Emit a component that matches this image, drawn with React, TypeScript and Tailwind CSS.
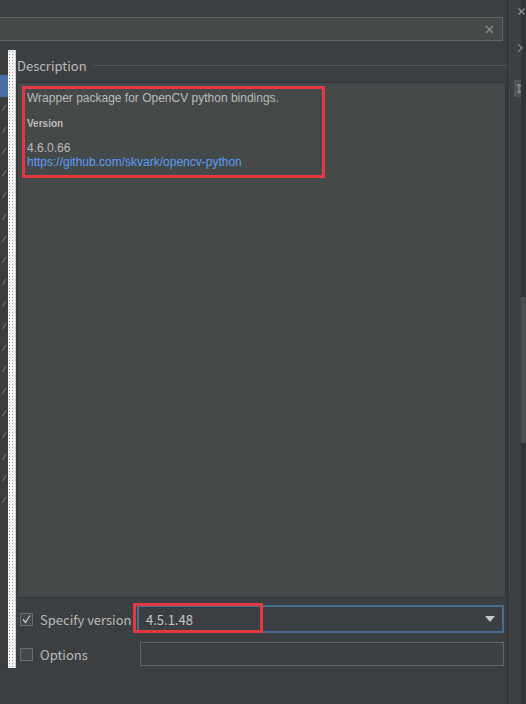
import React from "react";

const ui = { fontFamily: '"Noto Sans CJK SC", "Noto Sans", "Liberation Sans", sans-serif' };
const html = { fontFamily: '"Liberation Sans", Arial, sans-serif' };

function Tick() {
  return (
    <svg width="8" height="8" viewBox="0 0 8 8">
      <path d="M6 1 L2.5 7" stroke="#7d8083" strokeWidth="1" fill="none" />
    </svg>
  );
}

export default function App() {
  const rows = Array.from({ length: 19 });
  return (
    <div className="w-[526px] h-[704px] bg-[#3c3f41] flex overflow-hidden text-[#bbbbbb]" style={ui}>
      {/* main */}
      <div className="w-[507px] flex flex-col">
        <div className="h-[17px]" />
        <div className="h-[24px] mr-[4px] bg-[#45494a] border border-[#646464] border-l-0 flex items-center justify-end pr-[8px]">
          <svg width="9" height="9" viewBox="0 0 9 9">
            <path d="M1 1 L8 8 M8 1 L1 8" stroke="#8c8f91" strokeWidth="1.3" />
          </svg>
        </div>
        <div className="h-[9px]" />
        <div className="flex h-[618px]">
          {/* list */}
          <div className="w-[8px] bg-[#3a3d3f] flex flex-col pt-[25px]">
            <div className="h-[22px] bg-[#4a6ea8]" />
            {rows.map((_, i) => (
              <div key={i} className="h-[21.8px] flex items-center">
                <Tick />
              </div>
            ))}
          </div>
          {/* splitter */}
          <div className="w-[8px] bg-[#f4f4f4] bg-[radial-gradient(circle,#9c9c9c_0.7px,transparent_0.9px)] bg-[length:3px_3px] border-r border-[#d0d0d0]" />
          {/* content */}
          <div className="flex-1 flex flex-col pl-[1px]">
            <div className="h-[32px] flex items-center">
              <span className="text-[13px] leading-none mt-[-2px]">Description</span>
              <div className="flex-1 h-px bg-[#545759] ml-[6px] mt-[-2px]" />
            </div>
            <div className="h-[516px] mr-[1px] bg-[#45494a] border border-[#2f3133] pl-[4px] pt-[3px]">
              <div className="w-[303px] border-[3px] border-[#e6393e] pl-[2px] pt-[1px] pb-[6px]" style={html}>
                <div className="text-[12px] leading-[16px] text-[#bbbbbb]">Wrapper package for OpenCV python bindings.</div>
                <div className="text-[10px] leading-[12px] font-bold mt-[12px] text-[#bbbbbb]">Version</div>
                <div className="text-[12px] leading-[14px] mt-[11px] text-[#bbbbbb]">4.6.0.66</div>
                <div className="text-[12px] leading-[14px] text-[#589df6]">https://github.com/skvark/opencv-python</div>
              </div>
            </div>
            <div className="h-[7px]" />
            <div className="h-[28px] flex items-center relative">
              <div className="w-[13px] h-[13px] ml-[3px] shrink-0 border border-[#6b6e70] bg-[#43494a] flex items-center justify-center">
                <svg width="11" height="11" viewBox="0 0 11 11">
                  <path d="M2 5.5 L4.5 8.5 L9 1.5" stroke="#c4c4c4" strokeWidth="1.3" fill="none" />
                </svg>
              </div>
              <span className="ml-[7px] w-[97px] shrink-0 whitespace-nowrap text-[13px] leading-none">Specify version</span>
              <div className="w-[367px] shrink-0 h-[28px] border-2 border-[#466d94] bg-[#3c3f41] flex items-center pl-[7px] pr-[7px]">
                <span className="text-[13px] leading-none text-[#c6c6c6] flex-1">4.5.1.48</span>
                <svg width="10" height="7" viewBox="0 0 10 7">
                  <path d="M0 0 L10 0 L5 6 Z" fill="#c8c8c8" />
                </svg>
              </div>
              <div className="absolute left-[116px] top-[-2px] w-[130px] h-[30px] border-[3px] border-[#e6393e]" />
            </div>
            <div className="h-[9px]" />
            <div className="h-[24px] flex items-center">
              <div className="w-[13px] h-[13px] ml-[3px] shrink-0 border border-[#6b6e70] bg-[#43494a]" />
              <span className="ml-[7px] w-[100px] shrink-0 whitespace-nowrap text-[13px] leading-none">Options</span>
              <div className="w-[364px] shrink-0 h-[24px] border border-[#646464] bg-[#3e4143]" />
            </div>
          </div>
        </div>
      </div>
      {/* right strip */}
      <div className="w-px bg-[#2e3032]" />
      <div className="flex-1 flex">
        <div className="w-[13px] bg-[#3e4143] flex flex-col items-center">
          <div className="h-[80px]" />
          <div className="w-[10px] h-[17px] ml-[8px] bg-[#505456] flex items-center justify-center">
            <svg width="6" height="11" viewBox="0 0 6 11">
              <path d="M3 1 L3 10 M1 3 L3 1 L5 3 M1 8 L3 10 L5 8" stroke="#9a9a9a" strokeWidth="1" fill="none" />
            </svg>
          </div>
        </div>
        <div className="flex-1 bg-[#323436] flex flex-col relative">
          <svg className="absolute left-[-3px] top-[8px]" width="7" height="7" viewBox="0 0 7 7">
            <path d="M0.5 0.5 L6.5 6.5 M6.5 0.5 L0.5 6.5" stroke="#8c8f91" strokeWidth="1.2" />
          </svg>
          <svg className="absolute left-[-3px] top-[44px]" width="5" height="8" viewBox="0 0 5 8">
            <path d="M0.5 0.5 L4 4 L0.5 7.5" stroke="#8c8f91" strokeWidth="1.2" fill="none" />
          </svg>
          <div className="h-[297px]" />
          <div className="h-[146px] bg-[#4b4e50]" />
        </div>
      </div>
    </div>
  );
}
